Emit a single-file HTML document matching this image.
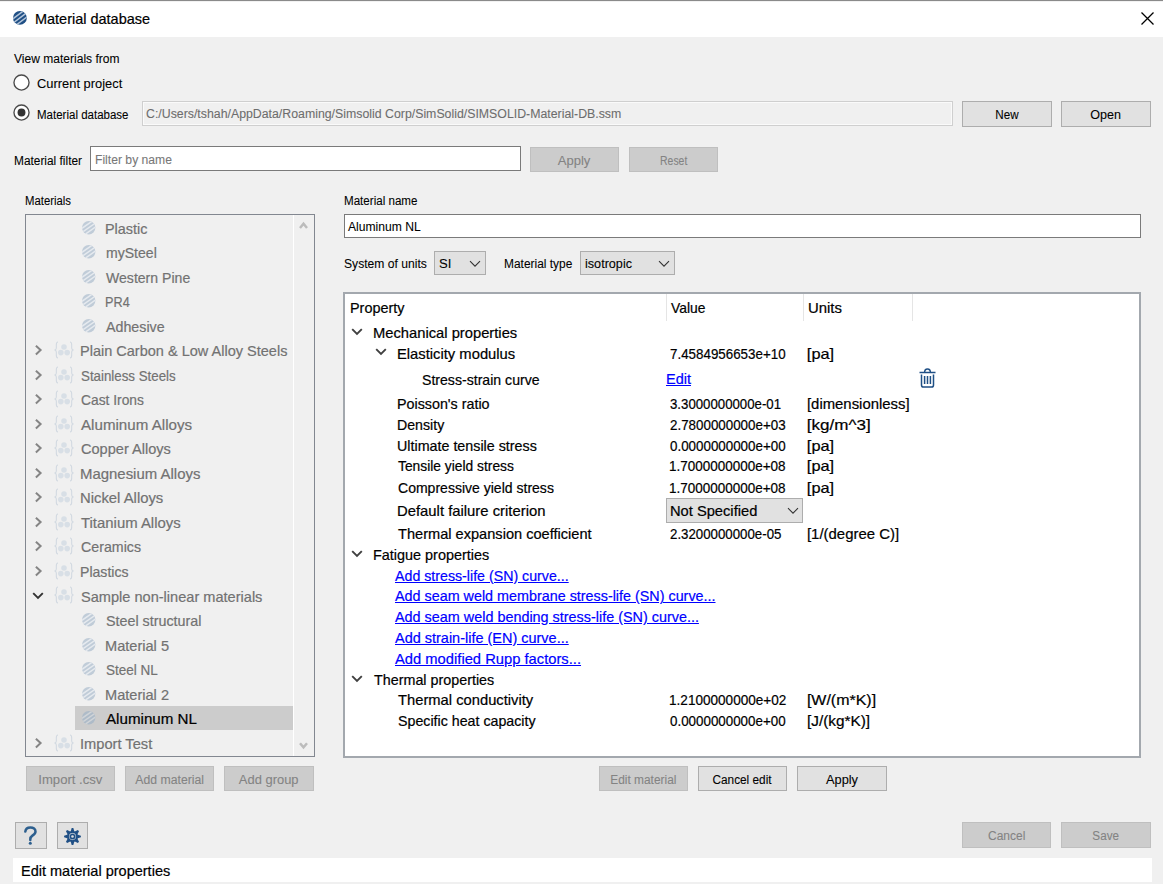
<!DOCTYPE html>
<html><head><meta charset="utf-8"><style>
html,body{margin:0;padding:0;}
body{width:1163px;height:884px;position:relative;overflow:hidden;background:#f0f0f0;font-family:"Liberation Sans", sans-serif;}
.t{position:absolute;white-space:nowrap;line-height:1;}
.b{position:absolute;}
svg.b{overflow:visible;}
</style></head><body>
<div class="b" style="left:0px;top:0px;width:1163px;height:1px;background:#8a8a8a;"></div>
<div class="b" style="left:0px;top:1px;width:1163px;height:1px;background:#f2f2f2;"></div>
<div class="b" style="left:0px;top:2px;width:1163px;height:35px;background:#ffffff;"></div>
<svg class="b" style="left:11.60px;top:9.60px" width="15.80" height="15.80" viewBox="-7.90 -7.90 15.80 15.80">
<defs><clipPath id="h1"><circle cx="0" cy="0" r="6.9"/></clipPath></defs>
<circle cx="0" cy="0" r="6.9" fill="#1f4f85"/>
<g clip-path="url(#h1)" stroke="#b5c6da" stroke-width="1.50"><line x1="-13.10" y1="5.55" x2="8.94" y2="-11.06"/><line x1="-11.02" y1="8.31" x2="11.02" y2="-8.31"/><line x1="-8.94" y1="11.06" x2="13.10" y2="-5.55"/></g></svg>
<div class="t" style="left:35.00px;top:11.71px;font-size:14.4px;color:#000;-webkit-text-stroke:0.2px currentColor;transform:scaleX(1.0054);transform-origin:1.00px 0;">Material database</div>
<svg class="b" style="left:1140px;top:11px" width="15" height="15" viewBox="0 0 15 15"><path d="M1.5 1.5L13.5 13.5M13.5 1.5L1.5 13.5" stroke="#000" stroke-width="1.3"/></svg>
<div class="t" style="left:13.50px;top:53.24px;font-size:12px;color:#000;-webkit-text-stroke:0.08px currentColor;transform:scaleX(1.0034);transform-origin:0.00px 0;">View materials from</div>
<svg class="b" style="left:13px;top:73.5px" width="17" height="17" viewBox="0 0 17 17"><circle cx="8.5" cy="8.5" r="7.55" fill="#fff" stroke="#4a4a4a" stroke-width="1.35"/></svg>
<div class="t" style="left:37.00px;top:78.24px;font-size:12px;color:#000;-webkit-text-stroke:0.08px currentColor;transform:scaleX(1.0746);transform-origin:0.00px 0;">Current project</div>
<svg class="b" style="left:13px;top:104.1px" width="17" height="17" viewBox="0 0 17 17"><circle cx="8.5" cy="8.5" r="7.55" fill="#fff" stroke="#4a4a4a" stroke-width="1.35"/><circle cx="8.5" cy="8.5" r="3.95" fill="#333"/></svg>
<div class="t" style="left:37.20px;top:108.74px;font-size:12px;color:#000;-webkit-text-stroke:0.08px currentColor;transform:scaleX(0.9591);transform-origin:0.00px 0;">Material database</div>
<div class="b" style="left:142px;top:101px;width:811px;height:24.5px;background:#f0f0f0;border:1px solid #cfcfcf;box-sizing:border-box;box-shadow:inset 0 0 0 1px #fafafa;"></div>
<div class="t" style="left:146.00px;top:107.99px;font-size:12.3px;color:#6d6d6d;-webkit-text-stroke:0.08px currentColor;transform:scaleX(1.0021);transform-origin:0.00px 0;">C:/Users/tshah/AppData/Roaming/Simsolid Corp/SimSolid/SIMSOLID-Material-DB.ssm</div>
<div class="b" style="left:962px;top:101px;width:90px;height:26px;background:#e1e1e1;border:1px solid #adadad;box-sizing:border-box;"></div>
<div class="t" style="left:995.00px;top:109.44px;font-size:12px;color:#000;-webkit-text-stroke:0.08px currentColor;transform:scaleX(0.9696);transform-origin:12.00px 0;">New</div>
<div class="b" style="left:1061px;top:101px;width:90px;height:26px;background:#e1e1e1;border:1px solid #adadad;box-sizing:border-box;"></div>
<div class="t" style="left:1091.32px;top:109.44px;font-size:12px;color:#000;-webkit-text-stroke:0.08px currentColor;transform:scaleX(1.0460);transform-origin:14.68px 0;">Open</div>
<div class="t" style="left:14.00px;top:155.24px;font-size:12px;color:#000;-webkit-text-stroke:0.08px currentColor;transform:scaleX(0.9900);transform-origin:0.00px 0;">Material filter</div>
<div class="b" style="left:90px;top:146px;width:431px;height:25px;background:#ffffff;border:1px solid #7a7a7a;box-sizing:border-box;"></div>
<div class="t" style="left:94.50px;top:154.24px;font-size:12px;color:#787878;-webkit-text-stroke:0.08px currentColor;transform:scaleX(1.0124);transform-origin:0.00px 0;">Filter by name</div>
<div class="b" style="left:530px;top:147px;width:89px;height:25px;background:#cccccc;border:1px solid #bfbfbf;box-sizing:border-box;"></div>
<div class="t" style="left:559.49px;top:154.94px;font-size:12px;color:#838383;-webkit-text-stroke:0.08px currentColor;transform:scaleX(1.0860);transform-origin:15.01px 0;">Apply</div>
<div class="b" style="left:629px;top:147px;width:89px;height:25px;background:#cccccc;border:1px solid #bfbfbf;box-sizing:border-box;"></div>
<div class="t" style="left:657.83px;top:154.94px;font-size:12px;color:#838383;-webkit-text-stroke:0.08px currentColor;transform:scaleX(0.8684);transform-origin:15.67px 0;">Reset</div>
<div class="t" style="left:25.00px;top:194.74px;font-size:12px;color:#000;-webkit-text-stroke:0.08px currentColor;transform:scaleX(0.9450);transform-origin:0.00px 0;">Materials</div>
<div class="b" style="left:25px;top:214px;width:290px;height:543px;background:#f0f0f0;border:1px solid #828790;box-sizing:border-box;"></div>
<div class="b" style="left:293px;top:215px;width:1px;height:541px;background:#ffffff;"></div>
<svg class="b" style="left:298px;top:220px" width="11" height="10" viewBox="0 0 11 10"><path d="M2 8L5.5 3.8L9 8" fill="none" stroke="#bcbcbc" stroke-width="2.5"/></svg>
<svg class="b" style="left:298px;top:740px" width="11" height="10" viewBox="0 0 11 10"><path d="M2 3.2L5.5 7.4L9 3.2" fill="none" stroke="#bcbcbc" stroke-width="2.5"/></svg>
<div class="b" style="left:75px;top:706px;width:218px;height:24px;background:#cccccc;"></div>
<svg class="b" style="left:80.60px;top:219.90px" width="15.40" height="15.40" viewBox="-7.70 -7.70 15.40 15.40">
<defs><clipPath id="h2"><circle cx="0" cy="0" r="6.7"/></clipPath></defs>
<circle cx="0" cy="0" r="6.7" fill="#c0ccd8"/>
<g clip-path="url(#h2)" stroke="#e6eaef" stroke-width="1.50"><line x1="-12.90" y1="4.94" x2="9.06" y2="-10.43"/><line x1="-10.98" y1="7.69" x2="10.98" y2="-7.69"/><line x1="-9.06" y1="10.43" x2="12.90" y2="-4.94"/></g></svg>
<div class="t" style="left:105.30px;top:221.71px;font-size:14.4px;color:#727272;-webkit-text-stroke:0.2px currentColor;transform:scaleX(1.0003);transform-origin:1.00px 0;">Plastic</div>
<svg class="b" style="left:80.60px;top:244.42px" width="15.40" height="15.40" viewBox="-7.70 -7.70 15.40 15.40">
<defs><clipPath id="h3"><circle cx="0" cy="0" r="6.7"/></clipPath></defs>
<circle cx="0" cy="0" r="6.7" fill="#c0ccd8"/>
<g clip-path="url(#h3)" stroke="#e6eaef" stroke-width="1.50"><line x1="-12.90" y1="4.94" x2="9.06" y2="-10.43"/><line x1="-10.98" y1="7.69" x2="10.98" y2="-7.69"/><line x1="-9.06" y1="10.43" x2="12.90" y2="-4.94"/></g></svg>
<div class="t" style="left:106.30px;top:246.23px;font-size:14.4px;color:#727272;-webkit-text-stroke:0.2px currentColor;transform:scaleX(0.9771);transform-origin:0.00px 0;">mySteel</div>
<svg class="b" style="left:80.60px;top:268.94px" width="15.40" height="15.40" viewBox="-7.70 -7.70 15.40 15.40">
<defs><clipPath id="h4"><circle cx="0" cy="0" r="6.7"/></clipPath></defs>
<circle cx="0" cy="0" r="6.7" fill="#c0ccd8"/>
<g clip-path="url(#h4)" stroke="#e6eaef" stroke-width="1.50"><line x1="-12.90" y1="4.94" x2="9.06" y2="-10.43"/><line x1="-10.98" y1="7.69" x2="10.98" y2="-7.69"/><line x1="-9.06" y1="10.43" x2="12.90" y2="-4.94"/></g></svg>
<div class="t" style="left:106.30px;top:270.75px;font-size:14.4px;color:#727272;-webkit-text-stroke:0.2px currentColor;transform:scaleX(0.9778);transform-origin:0.00px 0;">Western Pine</div>
<svg class="b" style="left:80.60px;top:293.46px" width="15.40" height="15.40" viewBox="-7.70 -7.70 15.40 15.40">
<defs><clipPath id="h5"><circle cx="0" cy="0" r="6.7"/></clipPath></defs>
<circle cx="0" cy="0" r="6.7" fill="#c0ccd8"/>
<g clip-path="url(#h5)" stroke="#e6eaef" stroke-width="1.50"><line x1="-12.90" y1="4.94" x2="9.06" y2="-10.43"/><line x1="-10.98" y1="7.69" x2="10.98" y2="-7.69"/><line x1="-9.06" y1="10.43" x2="12.90" y2="-4.94"/></g></svg>
<div class="t" style="left:105.30px;top:295.27px;font-size:14.4px;color:#727272;-webkit-text-stroke:0.2px currentColor;transform:scaleX(0.8799);transform-origin:1.00px 0;">PR4</div>
<svg class="b" style="left:80.60px;top:317.98px" width="15.40" height="15.40" viewBox="-7.70 -7.70 15.40 15.40">
<defs><clipPath id="h6"><circle cx="0" cy="0" r="6.7"/></clipPath></defs>
<circle cx="0" cy="0" r="6.7" fill="#c0ccd8"/>
<g clip-path="url(#h6)" stroke="#e6eaef" stroke-width="1.50"><line x1="-12.90" y1="4.94" x2="9.06" y2="-10.43"/><line x1="-10.98" y1="7.69" x2="10.98" y2="-7.69"/><line x1="-9.06" y1="10.43" x2="12.90" y2="-4.94"/></g></svg>
<div class="t" style="left:106.30px;top:319.79px;font-size:14.4px;color:#727272;-webkit-text-stroke:0.2px currentColor;transform:scaleX(0.9899);transform-origin:0.00px 0;">Adhesive</div>
<svg class="b" style="left:33.50px;top:344.20px" width="9" height="12" viewBox="0 0 9 12"><path d="M1.9 1.7L6.6 6.1L1.9 10.5" fill="none" stroke="#858585" stroke-width="2"/></svg>
<svg class="b" style="left:54.00px;top:341.20px" width="20" height="18" viewBox="0 0 20 18"><g fill="none" stroke="#d2d9e1" stroke-width="1.1">
<path d="M4 1C2.3 1 2.3 2 2.3 4V7C2.3 8 1.8 8.6 1 9C1.8 9.4 2.3 10 2.3 11V14C2.3 16 2.3 17 4 17"/>
<path d="M16 1C17.7 1 17.7 2 17.7 4V7C17.7 8 18.2 8.6 19 9C18.2 9.4 17.7 10 17.7 11V14C17.7 16 17.7 17 16 17"/></g>
<g fill="#d8dfe6"><circle cx="10" cy="6" r="2.8"/><circle cx="6.8" cy="11.6" r="2.8"/><circle cx="13.2" cy="11.6" r="2.8"/></g></svg>
<div class="t" style="left:80.10px;top:344.31px;font-size:14.4px;color:#727272;-webkit-text-stroke:0.2px currentColor;transform:scaleX(1.0089);transform-origin:1.00px 0;">Plain Carbon &amp; Low Alloy Steels</div>
<svg class="b" style="left:33.50px;top:368.72px" width="9" height="12" viewBox="0 0 9 12"><path d="M1.9 1.7L6.6 6.1L1.9 10.5" fill="none" stroke="#858585" stroke-width="2"/></svg>
<svg class="b" style="left:54.00px;top:365.72px" width="20" height="18" viewBox="0 0 20 18"><g fill="none" stroke="#d2d9e1" stroke-width="1.1">
<path d="M4 1C2.3 1 2.3 2 2.3 4V7C2.3 8 1.8 8.6 1 9C1.8 9.4 2.3 10 2.3 11V14C2.3 16 2.3 17 4 17"/>
<path d="M16 1C17.7 1 17.7 2 17.7 4V7C17.7 8 18.2 8.6 19 9C18.2 9.4 17.7 10 17.7 11V14C17.7 16 17.7 17 16 17"/></g>
<g fill="#d8dfe6"><circle cx="10" cy="6" r="2.8"/><circle cx="6.8" cy="11.6" r="2.8"/><circle cx="13.2" cy="11.6" r="2.8"/></g></svg>
<div class="t" style="left:81.10px;top:368.83px;font-size:14.4px;color:#727272;-webkit-text-stroke:0.2px currentColor;transform:scaleX(0.9247);transform-origin:0.00px 0;">Stainless Steels</div>
<svg class="b" style="left:33.50px;top:393.24px" width="9" height="12" viewBox="0 0 9 12"><path d="M1.9 1.7L6.6 6.1L1.9 10.5" fill="none" stroke="#858585" stroke-width="2"/></svg>
<svg class="b" style="left:54.00px;top:390.24px" width="20" height="18" viewBox="0 0 20 18"><g fill="none" stroke="#d2d9e1" stroke-width="1.1">
<path d="M4 1C2.3 1 2.3 2 2.3 4V7C2.3 8 1.8 8.6 1 9C1.8 9.4 2.3 10 2.3 11V14C2.3 16 2.3 17 4 17"/>
<path d="M16 1C17.7 1 17.7 2 17.7 4V7C17.7 8 18.2 8.6 19 9C18.2 9.4 17.7 10 17.7 11V14C17.7 16 17.7 17 16 17"/></g>
<g fill="#d8dfe6"><circle cx="10" cy="6" r="2.8"/><circle cx="6.8" cy="11.6" r="2.8"/><circle cx="13.2" cy="11.6" r="2.8"/></g></svg>
<div class="t" style="left:81.10px;top:393.35px;font-size:14.4px;color:#727272;-webkit-text-stroke:0.2px currentColor;transform:scaleX(0.9589);transform-origin:0.00px 0;">Cast Irons</div>
<svg class="b" style="left:33.50px;top:417.76px" width="9" height="12" viewBox="0 0 9 12"><path d="M1.9 1.7L6.6 6.1L1.9 10.5" fill="none" stroke="#858585" stroke-width="2"/></svg>
<svg class="b" style="left:54.00px;top:414.76px" width="20" height="18" viewBox="0 0 20 18"><g fill="none" stroke="#d2d9e1" stroke-width="1.1">
<path d="M4 1C2.3 1 2.3 2 2.3 4V7C2.3 8 1.8 8.6 1 9C1.8 9.4 2.3 10 2.3 11V14C2.3 16 2.3 17 4 17"/>
<path d="M16 1C17.7 1 17.7 2 17.7 4V7C17.7 8 18.2 8.6 19 9C18.2 9.4 17.7 10 17.7 11V14C17.7 16 17.7 17 16 17"/></g>
<g fill="#d8dfe6"><circle cx="10" cy="6" r="2.8"/><circle cx="6.8" cy="11.6" r="2.8"/><circle cx="13.2" cy="11.6" r="2.8"/></g></svg>
<div class="t" style="left:81.10px;top:417.87px;font-size:14.4px;color:#727272;-webkit-text-stroke:0.2px currentColor;transform:scaleX(1.0521);transform-origin:0.00px 0;">Aluminum Alloys</div>
<svg class="b" style="left:33.50px;top:442.28px" width="9" height="12" viewBox="0 0 9 12"><path d="M1.9 1.7L6.6 6.1L1.9 10.5" fill="none" stroke="#858585" stroke-width="2"/></svg>
<svg class="b" style="left:54.00px;top:439.28px" width="20" height="18" viewBox="0 0 20 18"><g fill="none" stroke="#d2d9e1" stroke-width="1.1">
<path d="M4 1C2.3 1 2.3 2 2.3 4V7C2.3 8 1.8 8.6 1 9C1.8 9.4 2.3 10 2.3 11V14C2.3 16 2.3 17 4 17"/>
<path d="M16 1C17.7 1 17.7 2 17.7 4V7C17.7 8 18.2 8.6 19 9C18.2 9.4 17.7 10 17.7 11V14C17.7 16 17.7 17 16 17"/></g>
<g fill="#d8dfe6"><circle cx="10" cy="6" r="2.8"/><circle cx="6.8" cy="11.6" r="2.8"/><circle cx="13.2" cy="11.6" r="2.8"/></g></svg>
<div class="t" style="left:81.10px;top:442.39px;font-size:14.4px;color:#727272;-webkit-text-stroke:0.2px currentColor;transform:scaleX(1.0113);transform-origin:0.00px 0;">Copper Alloys</div>
<svg class="b" style="left:33.50px;top:466.80px" width="9" height="12" viewBox="0 0 9 12"><path d="M1.9 1.7L6.6 6.1L1.9 10.5" fill="none" stroke="#858585" stroke-width="2"/></svg>
<svg class="b" style="left:54.00px;top:463.80px" width="20" height="18" viewBox="0 0 20 18"><g fill="none" stroke="#d2d9e1" stroke-width="1.1">
<path d="M4 1C2.3 1 2.3 2 2.3 4V7C2.3 8 1.8 8.6 1 9C1.8 9.4 2.3 10 2.3 11V14C2.3 16 2.3 17 4 17"/>
<path d="M16 1C17.7 1 17.7 2 17.7 4V7C17.7 8 18.2 8.6 19 9C18.2 9.4 17.7 10 17.7 11V14C17.7 16 17.7 17 16 17"/></g>
<g fill="#d8dfe6"><circle cx="10" cy="6" r="2.8"/><circle cx="6.8" cy="11.6" r="2.8"/><circle cx="13.2" cy="11.6" r="2.8"/></g></svg>
<div class="t" style="left:80.10px;top:466.91px;font-size:14.4px;color:#727272;-webkit-text-stroke:0.2px currentColor;transform:scaleX(1.0383);transform-origin:1.00px 0;">Magnesium Alloys</div>
<svg class="b" style="left:33.50px;top:491.32px" width="9" height="12" viewBox="0 0 9 12"><path d="M1.9 1.7L6.6 6.1L1.9 10.5" fill="none" stroke="#858585" stroke-width="2"/></svg>
<svg class="b" style="left:54.00px;top:488.32px" width="20" height="18" viewBox="0 0 20 18"><g fill="none" stroke="#d2d9e1" stroke-width="1.1">
<path d="M4 1C2.3 1 2.3 2 2.3 4V7C2.3 8 1.8 8.6 1 9C1.8 9.4 2.3 10 2.3 11V14C2.3 16 2.3 17 4 17"/>
<path d="M16 1C17.7 1 17.7 2 17.7 4V7C17.7 8 18.2 8.6 19 9C18.2 9.4 17.7 10 17.7 11V14C17.7 16 17.7 17 16 17"/></g>
<g fill="#d8dfe6"><circle cx="10" cy="6" r="2.8"/><circle cx="6.8" cy="11.6" r="2.8"/><circle cx="13.2" cy="11.6" r="2.8"/></g></svg>
<div class="t" style="left:80.10px;top:491.43px;font-size:14.4px;color:#727272;-webkit-text-stroke:0.2px currentColor;transform:scaleX(1.0315);transform-origin:1.00px 0;">Nickel Alloys</div>
<svg class="b" style="left:33.50px;top:515.84px" width="9" height="12" viewBox="0 0 9 12"><path d="M1.9 1.7L6.6 6.1L1.9 10.5" fill="none" stroke="#858585" stroke-width="2"/></svg>
<svg class="b" style="left:54.00px;top:512.84px" width="20" height="18" viewBox="0 0 20 18"><g fill="none" stroke="#d2d9e1" stroke-width="1.1">
<path d="M4 1C2.3 1 2.3 2 2.3 4V7C2.3 8 1.8 8.6 1 9C1.8 9.4 2.3 10 2.3 11V14C2.3 16 2.3 17 4 17"/>
<path d="M16 1C17.7 1 17.7 2 17.7 4V7C17.7 8 18.2 8.6 19 9C18.2 9.4 17.7 10 17.7 11V14C17.7 16 17.7 17 16 17"/></g>
<g fill="#d8dfe6"><circle cx="10" cy="6" r="2.8"/><circle cx="6.8" cy="11.6" r="2.8"/><circle cx="13.2" cy="11.6" r="2.8"/></g></svg>
<div class="t" style="left:81.10px;top:515.95px;font-size:14.4px;color:#727272;-webkit-text-stroke:0.2px currentColor;transform:scaleX(1.0358);transform-origin:0.00px 0;">Titanium Alloys</div>
<svg class="b" style="left:33.50px;top:540.36px" width="9" height="12" viewBox="0 0 9 12"><path d="M1.9 1.7L6.6 6.1L1.9 10.5" fill="none" stroke="#858585" stroke-width="2"/></svg>
<svg class="b" style="left:54.00px;top:537.36px" width="20" height="18" viewBox="0 0 20 18"><g fill="none" stroke="#d2d9e1" stroke-width="1.1">
<path d="M4 1C2.3 1 2.3 2 2.3 4V7C2.3 8 1.8 8.6 1 9C1.8 9.4 2.3 10 2.3 11V14C2.3 16 2.3 17 4 17"/>
<path d="M16 1C17.7 1 17.7 2 17.7 4V7C17.7 8 18.2 8.6 19 9C18.2 9.4 17.7 10 17.7 11V14C17.7 16 17.7 17 16 17"/></g>
<g fill="#d8dfe6"><circle cx="10" cy="6" r="2.8"/><circle cx="6.8" cy="11.6" r="2.8"/><circle cx="13.2" cy="11.6" r="2.8"/></g></svg>
<div class="t" style="left:81.10px;top:540.47px;font-size:14.4px;color:#727272;-webkit-text-stroke:0.2px currentColor;transform:scaleX(0.9873);transform-origin:0.00px 0;">Ceramics</div>
<svg class="b" style="left:33.50px;top:564.88px" width="9" height="12" viewBox="0 0 9 12"><path d="M1.9 1.7L6.6 6.1L1.9 10.5" fill="none" stroke="#858585" stroke-width="2"/></svg>
<svg class="b" style="left:54.00px;top:561.88px" width="20" height="18" viewBox="0 0 20 18"><g fill="none" stroke="#d2d9e1" stroke-width="1.1">
<path d="M4 1C2.3 1 2.3 2 2.3 4V7C2.3 8 1.8 8.6 1 9C1.8 9.4 2.3 10 2.3 11V14C2.3 16 2.3 17 4 17"/>
<path d="M16 1C17.7 1 17.7 2 17.7 4V7C17.7 8 18.2 8.6 19 9C18.2 9.4 17.7 10 17.7 11V14C17.7 16 17.7 17 16 17"/></g>
<g fill="#d8dfe6"><circle cx="10" cy="6" r="2.8"/><circle cx="6.8" cy="11.6" r="2.8"/><circle cx="13.2" cy="11.6" r="2.8"/></g></svg>
<div class="t" style="left:80.10px;top:564.99px;font-size:14.4px;color:#727272;-webkit-text-stroke:0.2px currentColor;transform:scaleX(0.9776);transform-origin:1.00px 0;">Plastics</div>
<svg class="b" style="left:31.80px;top:592.00px" width="12" height="9" viewBox="0 0 12 9"><path d="M1.2 1.2L6 6L10.8 1.2" fill="none" stroke="#333333" stroke-width="1.9"/></svg>
<svg class="b" style="left:54.00px;top:586.40px" width="20" height="18" viewBox="0 0 20 18"><g fill="none" stroke="#d2d9e1" stroke-width="1.1">
<path d="M4 1C2.3 1 2.3 2 2.3 4V7C2.3 8 1.8 8.6 1 9C1.8 9.4 2.3 10 2.3 11V14C2.3 16 2.3 17 4 17"/>
<path d="M16 1C17.7 1 17.7 2 17.7 4V7C17.7 8 18.2 8.6 19 9C18.2 9.4 17.7 10 17.7 11V14C17.7 16 17.7 17 16 17"/></g>
<g fill="#d8dfe6"><circle cx="10" cy="6" r="2.8"/><circle cx="6.8" cy="11.6" r="2.8"/><circle cx="13.2" cy="11.6" r="2.8"/></g></svg>
<div class="t" style="left:81.10px;top:589.51px;font-size:14.4px;color:#727272;-webkit-text-stroke:0.2px currentColor;transform:scaleX(1.0125);transform-origin:0.00px 0;">Sample non-linear materials</div>
<svg class="b" style="left:80.60px;top:612.22px" width="15.40" height="15.40" viewBox="-7.70 -7.70 15.40 15.40">
<defs><clipPath id="h7"><circle cx="0" cy="0" r="6.7"/></clipPath></defs>
<circle cx="0" cy="0" r="6.7" fill="#c0ccd8"/>
<g clip-path="url(#h7)" stroke="#e6eaef" stroke-width="1.50"><line x1="-12.90" y1="4.94" x2="9.06" y2="-10.43"/><line x1="-10.98" y1="7.69" x2="10.98" y2="-7.69"/><line x1="-9.06" y1="10.43" x2="12.90" y2="-4.94"/></g></svg>
<div class="t" style="left:106.30px;top:614.03px;font-size:14.4px;color:#727272;-webkit-text-stroke:0.2px currentColor;transform:scaleX(0.9939);transform-origin:0.00px 0;">Steel structural</div>
<svg class="b" style="left:80.60px;top:636.74px" width="15.40" height="15.40" viewBox="-7.70 -7.70 15.40 15.40">
<defs><clipPath id="h8"><circle cx="0" cy="0" r="6.7"/></clipPath></defs>
<circle cx="0" cy="0" r="6.7" fill="#c0ccd8"/>
<g clip-path="url(#h8)" stroke="#e6eaef" stroke-width="1.50"><line x1="-12.90" y1="4.94" x2="9.06" y2="-10.43"/><line x1="-10.98" y1="7.69" x2="10.98" y2="-7.69"/><line x1="-9.06" y1="10.43" x2="12.90" y2="-4.94"/></g></svg>
<div class="t" style="left:105.30px;top:638.55px;font-size:14.4px;color:#727272;-webkit-text-stroke:0.2px currentColor;transform:scaleX(1.0132);transform-origin:1.00px 0;">Material 5</div>
<svg class="b" style="left:80.60px;top:661.26px" width="15.40" height="15.40" viewBox="-7.70 -7.70 15.40 15.40">
<defs><clipPath id="h9"><circle cx="0" cy="0" r="6.7"/></clipPath></defs>
<circle cx="0" cy="0" r="6.7" fill="#c0ccd8"/>
<g clip-path="url(#h9)" stroke="#e6eaef" stroke-width="1.50"><line x1="-12.90" y1="4.94" x2="9.06" y2="-10.43"/><line x1="-10.98" y1="7.69" x2="10.98" y2="-7.69"/><line x1="-9.06" y1="10.43" x2="12.90" y2="-4.94"/></g></svg>
<div class="t" style="left:106.30px;top:663.07px;font-size:14.4px;color:#727272;-webkit-text-stroke:0.2px currentColor;transform:scaleX(0.9367);transform-origin:0.00px 0;">Steel NL</div>
<svg class="b" style="left:80.60px;top:685.78px" width="15.40" height="15.40" viewBox="-7.70 -7.70 15.40 15.40">
<defs><clipPath id="h10"><circle cx="0" cy="0" r="6.7"/></clipPath></defs>
<circle cx="0" cy="0" r="6.7" fill="#c0ccd8"/>
<g clip-path="url(#h10)" stroke="#e6eaef" stroke-width="1.50"><line x1="-12.90" y1="4.94" x2="9.06" y2="-10.43"/><line x1="-10.98" y1="7.69" x2="10.98" y2="-7.69"/><line x1="-9.06" y1="10.43" x2="12.90" y2="-4.94"/></g></svg>
<div class="t" style="left:105.30px;top:687.59px;font-size:14.4px;color:#727272;-webkit-text-stroke:0.2px currentColor;transform:scaleX(1.0132);transform-origin:1.00px 0;">Material 2</div>
<svg class="b" style="left:80.60px;top:710.30px" width="15.40" height="15.40" viewBox="-7.70 -7.70 15.40 15.40">
<defs><clipPath id="h11"><circle cx="0" cy="0" r="6.7"/></clipPath></defs>
<circle cx="0" cy="0" r="6.7" fill="#aebbc8"/>
<g clip-path="url(#h11)" stroke="#d0d4d8" stroke-width="1.50"><line x1="-12.90" y1="4.94" x2="9.06" y2="-10.43"/><line x1="-10.98" y1="7.69" x2="10.98" y2="-7.69"/><line x1="-9.06" y1="10.43" x2="12.90" y2="-4.94"/></g></svg>
<div class="t" style="left:106.30px;top:712.11px;font-size:14.4px;color:#000;-webkit-text-stroke:0.2px currentColor;transform:scaleX(1.0536);transform-origin:0.00px 0;">Aluminum NL</div>
<svg class="b" style="left:33.50px;top:736.52px" width="9" height="12" viewBox="0 0 9 12"><path d="M1.9 1.7L6.6 6.1L1.9 10.5" fill="none" stroke="#858585" stroke-width="2"/></svg>
<svg class="b" style="left:54.00px;top:733.52px" width="20" height="18" viewBox="0 0 20 18"><g fill="none" stroke="#d2d9e1" stroke-width="1.1">
<path d="M4 1C2.3 1 2.3 2 2.3 4V7C2.3 8 1.8 8.6 1 9C1.8 9.4 2.3 10 2.3 11V14C2.3 16 2.3 17 4 17"/>
<path d="M16 1C17.7 1 17.7 2 17.7 4V7C17.7 8 18.2 8.6 19 9C18.2 9.4 17.7 10 17.7 11V14C17.7 16 17.7 17 16 17"/></g>
<g fill="#d8dfe6"><circle cx="10" cy="6" r="2.8"/><circle cx="6.8" cy="11.6" r="2.8"/><circle cx="13.2" cy="11.6" r="2.8"/></g></svg>
<div class="t" style="left:80.10px;top:736.63px;font-size:14.4px;color:#727272;-webkit-text-stroke:0.2px currentColor;transform:scaleX(1.0189);transform-origin:1.00px 0;">Import Test</div>
<div class="b" style="left:26px;top:766px;width:89px;height:25px;background:#cccccc;border:1px solid #bfbfbf;box-sizing:border-box;"></div>
<div class="t" style="left:41.16px;top:773.94px;font-size:12px;color:#838383;-webkit-text-stroke:0.08px currentColor;transform:scaleX(1.0923);transform-origin:29.34px 0;">Import .csv</div>
<div class="b" style="left:125px;top:766px;width:89px;height:25px;background:#cccccc;border:1px solid #bfbfbf;box-sizing:border-box;"></div>
<div class="t" style="left:135.82px;top:773.94px;font-size:12px;color:#838383;-webkit-text-stroke:0.08px currentColor;transform:scaleX(1.0195);transform-origin:33.68px 0;">Add material</div>
<div class="b" style="left:224px;top:766px;width:90px;height:25px;background:#cccccc;border:1px solid #bfbfbf;box-sizing:border-box;"></div>
<div class="t" style="left:241.31px;top:773.94px;font-size:12px;color:#838383;-webkit-text-stroke:0.08px currentColor;transform:scaleX(1.0771);transform-origin:27.69px 0;">Add group</div>
<div class="t" style="left:344.20px;top:194.74px;font-size:12px;color:#000;-webkit-text-stroke:0.08px currentColor;transform:scaleX(0.9665);transform-origin:0.00px 0;">Material name</div>
<div class="b" style="left:344px;top:214px;width:797px;height:24px;background:#ffffff;border:1px solid #7a7a7a;box-sizing:border-box;"></div>
<div class="t" style="left:348.00px;top:221.44px;font-size:12px;color:#000;-webkit-text-stroke:0.08px currentColor;transform:scaleX(1.0090);transform-origin:0.00px 0;">Aluminum NL</div>
<div class="t" style="left:344.00px;top:258.24px;font-size:12px;color:#000;-webkit-text-stroke:0.08px currentColor;transform:scaleX(1.0094);transform-origin:0.00px 0;">System of units</div>
<div class="b" style="left:434px;top:251px;width:52px;height:24px;background:#e1e1e1;border:1px solid #adadad;box-sizing:border-box;"></div>
<div class="t" style="left:438.75px;top:258.24px;font-size:12px;color:#000;-webkit-text-stroke:0.08px currentColor;transform:scaleX(1.0905);transform-origin:0.00px 0;">SI</div>
<svg class="b" style="left:469px;top:260px" width="12" height="8" viewBox="0 0 12 8"><path d="M1 1.2L6 6.2L11 1.2" fill="none" stroke="#333" stroke-width="1.1"/></svg>
<div class="t" style="left:503.75px;top:258.24px;font-size:12px;color:#000;-webkit-text-stroke:0.08px currentColor;transform:scaleX(0.9939);transform-origin:0.00px 0;">Material type</div>
<div class="b" style="left:580px;top:251px;width:95px;height:24px;background:#e1e1e1;border:1px solid #adadad;box-sizing:border-box;"></div>
<div class="t" style="left:585.00px;top:258.24px;font-size:12px;color:#000;-webkit-text-stroke:0.08px currentColor;transform:scaleX(1.0518);transform-origin:0.00px 0;">isotropic</div>
<svg class="b" style="left:658px;top:260px" width="12" height="8" viewBox="0 0 12 8"><path d="M1 1.2L6 6.2L11 1.2" fill="none" stroke="#333" stroke-width="1.1"/></svg>
<div class="b" style="left:343px;top:292px;width:798px;height:465.5px;background:#ffffff;border:2px solid #a3a8ae;box-sizing:border-box;"></div>
<div class="b" style="left:666px;top:294px;width:1px;height:27px;background:#e5e5e5;"></div>
<div class="b" style="left:803px;top:294px;width:1px;height:27px;background:#e5e5e5;"></div>
<div class="b" style="left:912px;top:294px;width:1px;height:27px;background:#e5e5e5;"></div>
<div class="t" style="left:349.50px;top:300.81px;font-size:14.4px;color:#000;-webkit-text-stroke:0.2px currentColor;transform:scaleX(1.0020);transform-origin:1.00px 0;">Property</div>
<div class="t" style="left:671.40px;top:301.21px;font-size:14.4px;color:#000;-webkit-text-stroke:0.2px currentColor;transform:scaleX(0.9627);transform-origin:0.00px 0;">Value</div>
<div class="t" style="left:807.70px;top:301.21px;font-size:14.4px;color:#000;-webkit-text-stroke:0.2px currentColor;transform:scaleX(1.0351);transform-origin:1.00px 0;">Units</div>
<svg class="b" style="left:350.60px;top:327.60px" width="12" height="9" viewBox="0 0 12 9"><path d="M1.2 1.2L6 6L10.8 1.2" fill="none" stroke="#404040" stroke-width="1.9"/></svg>
<div class="t" style="left:372.50px;top:325.71px;font-size:14.4px;color:#000;-webkit-text-stroke:0.2px currentColor;transform:scaleX(1.0245);transform-origin:1.00px 0;">Mechanical properties</div>
<svg class="b" style="left:375.00px;top:348.40px" width="12" height="9" viewBox="0 0 12 9"><path d="M1.2 1.2L6 6L10.8 1.2" fill="none" stroke="#404040" stroke-width="1.9"/></svg>
<div class="t" style="left:397.40px;top:346.91px;font-size:14.4px;color:#000;-webkit-text-stroke:0.2px currentColor;transform:scaleX(1.0266);transform-origin:1.00px 0;">Elasticity modulus</div>
<div class="t" style="left:670.40px;top:346.91px;font-size:14.4px;color:#000;-webkit-text-stroke:0.2px currentColor;transform:scaleX(0.9289);transform-origin:0.00px 0;">7.4584956653e+10</div>
<div class="t" style="left:806.70px;top:346.91px;font-size:14.4px;color:#000;-webkit-text-stroke:0.2px currentColor;transform:scaleX(1.1361);transform-origin:1.00px 0;">[pa]</div>
<div class="t" style="left:422.30px;top:373.21px;font-size:14.4px;color:#000;-webkit-text-stroke:0.2px currentColor;transform:scaleX(0.9804);transform-origin:0.00px 0;">Stress-strain curve</div>
<div class="t" style="left:665.50px;top:371.81px;font-size:14.4px;color:#0000ff;-webkit-text-stroke:0.2px currentColor;transform:scaleX(1.0084);transform-origin:1.00px 0;text-decoration:underline;">Edit</div>
<svg class="b" style="left:917px;top:366px" width="22" height="24" viewBox="0 0 22 24"><g fill="none" stroke="#1f4f85" stroke-width="1.5">
<path d="M2.5 6.5H18.5"/><path d="M7.6 6.5C7.6 4 8.6 3 10.5 3C12.4 3 13.4 4 13.4 6.5"/>
<path d="M4.5 8.6V19C4.5 20.5 5.3 21.1 6.5 21.1H14.5C15.7 21.1 16.5 20.5 16.5 19V8.6"/>
<path d="M7.6 10V18M10.5 10V18M13.4 10V18"/></g></svg>
<div class="t" style="left:397.40px;top:397.21px;font-size:14.4px;color:#000;-webkit-text-stroke:0.2px currentColor;transform:scaleX(0.9932);transform-origin:1.00px 0;">Poisson&#x27;s ratio</div>
<div class="t" style="left:670.40px;top:397.21px;font-size:14.4px;color:#000;-webkit-text-stroke:0.2px currentColor;transform:scaleX(0.9186);transform-origin:0.00px 0;">3.3000000000e-01</div>
<div class="t" style="left:806.70px;top:397.21px;font-size:14.4px;color:#000;-webkit-text-stroke:0.2px currentColor;transform:scaleX(1.0341);transform-origin:1.00px 0;">[dimensionless]</div>
<div class="t" style="left:397.40px;top:417.96px;font-size:14.4px;color:#000;-webkit-text-stroke:0.2px currentColor;transform:scaleX(0.9835);transform-origin:1.00px 0;">Density</div>
<div class="t" style="left:670.40px;top:417.96px;font-size:14.4px;color:#000;-webkit-text-stroke:0.2px currentColor;transform:scaleX(0.9289);transform-origin:0.00px 0;">2.7800000000e+03</div>
<div class="t" style="left:806.70px;top:417.96px;font-size:14.4px;color:#000;-webkit-text-stroke:0.2px currentColor;transform:scaleX(1.1841);transform-origin:1.00px 0;">[kg/m^3]</div>
<div class="t" style="left:397.40px;top:438.81px;font-size:14.4px;color:#000;-webkit-text-stroke:0.2px currentColor;transform:scaleX(0.9931);transform-origin:1.00px 0;">Ultimate tensile stress</div>
<div class="t" style="left:670.40px;top:438.81px;font-size:14.4px;color:#000;-webkit-text-stroke:0.2px currentColor;transform:scaleX(0.9289);transform-origin:0.00px 0;">0.0000000000e+00</div>
<div class="t" style="left:806.70px;top:438.81px;font-size:14.4px;color:#000;-webkit-text-stroke:0.2px currentColor;transform:scaleX(1.1361);transform-origin:1.00px 0;">[pa]</div>
<div class="t" style="left:398.40px;top:459.46px;font-size:14.4px;color:#000;-webkit-text-stroke:0.2px currentColor;transform:scaleX(0.9596);transform-origin:0.00px 0;">Tensile yield stress</div>
<div class="t" style="left:669.40px;top:459.46px;font-size:14.4px;color:#000;-webkit-text-stroke:0.2px currentColor;transform:scaleX(0.9364);transform-origin:1.00px 0;">1.7000000000e+08</div>
<div class="t" style="left:806.70px;top:459.46px;font-size:14.4px;color:#000;-webkit-text-stroke:0.2px currentColor;transform:scaleX(1.1361);transform-origin:1.00px 0;">[pa]</div>
<div class="t" style="left:398.40px;top:480.71px;font-size:14.4px;color:#000;-webkit-text-stroke:0.2px currentColor;transform:scaleX(0.9747);transform-origin:0.00px 0;">Compressive yield stress</div>
<div class="t" style="left:669.40px;top:480.71px;font-size:14.4px;color:#000;-webkit-text-stroke:0.2px currentColor;transform:scaleX(0.9364);transform-origin:1.00px 0;">1.7000000000e+08</div>
<div class="t" style="left:806.70px;top:480.71px;font-size:14.4px;color:#000;-webkit-text-stroke:0.2px currentColor;transform:scaleX(1.1361);transform-origin:1.00px 0;">[pa]</div>
<div class="t" style="left:397.40px;top:503.81px;font-size:14.4px;color:#000;-webkit-text-stroke:0.2px currentColor;transform:scaleX(1.0317);transform-origin:1.00px 0;">Default failure criterion</div>
<div class="b" style="left:666px;top:498px;width:137px;height:25px;background:#e1e1e1;border:1px solid #adadad;box-sizing:border-box;"></div>
<div class="t" style="left:670.10px;top:503.81px;font-size:14.4px;color:#000;-webkit-text-stroke:0.2px currentColor;transform:scaleX(1.0202);transform-origin:1.00px 0;">Not Specified</div>
<svg class="b" style="left:786.5px;top:507px" width="12" height="8" viewBox="0 0 12 8"><path d="M1 1.2L6 6.2L11 1.2" fill="none" stroke="#333" stroke-width="1.1"/></svg>
<div class="t" style="left:398.40px;top:526.51px;font-size:14.4px;color:#000;-webkit-text-stroke:0.2px currentColor;transform:scaleX(1.0141);transform-origin:0.00px 0;">Thermal expansion coefficient</div>
<div class="t" style="left:670.40px;top:526.51px;font-size:14.4px;color:#000;-webkit-text-stroke:0.2px currentColor;transform:scaleX(0.9219);transform-origin:0.00px 0;">2.3200000000e-05</div>
<div class="t" style="left:806.70px;top:526.51px;font-size:14.4px;color:#000;-webkit-text-stroke:0.2px currentColor;transform:scaleX(1.0371);transform-origin:1.00px 0;">[1/(degree C)]</div>
<svg class="b" style="left:350.60px;top:549.80px" width="12" height="9" viewBox="0 0 12 9"><path d="M1.2 1.2L6 6L10.8 1.2" fill="none" stroke="#404040" stroke-width="1.9"/></svg>
<div class="t" style="left:372.75px;top:547.96px;font-size:14.4px;color:#000;-webkit-text-stroke:0.2px currentColor;transform:scaleX(1.0018);transform-origin:1.00px 0;">Fatigue properties</div>
<div class="t" style="left:395.00px;top:568.51px;font-size:14.4px;color:#0000ff;-webkit-text-stroke:0.2px currentColor;transform:scaleX(0.9873);transform-origin:0.00px 0;text-decoration:underline;">Add stress-life (SN) curve...</div>
<div class="t" style="left:395.00px;top:589.36px;font-size:14.4px;color:#0000ff;-webkit-text-stroke:0.2px currentColor;transform:scaleX(0.9969);transform-origin:0.00px 0;text-decoration:underline;">Add seam weld membrane stress-life (SN) curve...</div>
<div class="t" style="left:395.00px;top:610.21px;font-size:14.4px;color:#0000ff;-webkit-text-stroke:0.2px currentColor;transform:scaleX(0.9999);transform-origin:0.00px 0;text-decoration:underline;">Add seam weld bending stress-life (SN) curve...</div>
<div class="t" style="left:395.00px;top:631.06px;font-size:14.4px;color:#0000ff;-webkit-text-stroke:0.2px currentColor;transform:scaleX(1.0056);transform-origin:0.00px 0;text-decoration:underline;">Add strain-life (EN) curve...</div>
<div class="t" style="left:395.00px;top:651.91px;font-size:14.4px;color:#0000ff;-webkit-text-stroke:0.2px currentColor;transform:scaleX(1.0245);transform-origin:0.00px 0;text-decoration:underline;">Add modified Rupp factors...</div>
<svg class="b" style="left:350.60px;top:674.50px" width="12" height="9" viewBox="0 0 12 9"><path d="M1.2 1.2L6 6L10.8 1.2" fill="none" stroke="#404040" stroke-width="1.9"/></svg>
<div class="t" style="left:374.00px;top:672.51px;font-size:14.4px;color:#000;-webkit-text-stroke:0.2px currentColor;transform:scaleX(0.9953);transform-origin:0.00px 0;">Thermal properties</div>
<div class="t" style="left:398.40px;top:693.31px;font-size:14.4px;color:#000;-webkit-text-stroke:0.2px currentColor;transform:scaleX(1.0244);transform-origin:0.00px 0;">Thermal conductivity</div>
<div class="t" style="left:669.40px;top:693.31px;font-size:14.4px;color:#000;-webkit-text-stroke:0.2px currentColor;transform:scaleX(0.9421);transform-origin:1.00px 0;">1.2100000000e+02</div>
<div class="t" style="left:806.70px;top:693.31px;font-size:14.4px;color:#000;-webkit-text-stroke:0.2px currentColor;transform:scaleX(1.1102);transform-origin:1.00px 0;">[W/(m*K)]</div>
<div class="t" style="left:398.40px;top:714.41px;font-size:14.4px;color:#000;-webkit-text-stroke:0.2px currentColor;transform:scaleX(0.9886);transform-origin:0.00px 0;">Specific heat capacity</div>
<div class="t" style="left:670.40px;top:714.41px;font-size:14.4px;color:#000;-webkit-text-stroke:0.2px currentColor;transform:scaleX(0.9289);transform-origin:0.00px 0;">0.0000000000e+00</div>
<div class="t" style="left:806.70px;top:714.41px;font-size:14.4px;color:#000;-webkit-text-stroke:0.2px currentColor;transform:scaleX(1.0669);transform-origin:1.00px 0;">[J/(kg*K)]</div>
<div class="b" style="left:599px;top:766px;width:89px;height:25px;background:#cccccc;border:1px solid #bfbfbf;box-sizing:border-box;"></div>
<div class="t" style="left:610.15px;top:773.94px;font-size:12px;color:#838383;-webkit-text-stroke:0.08px currentColor;transform:scaleX(0.9920);transform-origin:33.35px 0;">Edit material</div>
<div class="b" style="left:698px;top:766px;width:89px;height:25px;background:#e1e1e1;border:1px solid #adadad;box-sizing:border-box;"></div>
<div class="t" style="left:712.48px;top:773.94px;font-size:12px;color:#000;-webkit-text-stroke:0.08px currentColor;transform:scaleX(0.9852);transform-origin:30.02px 0;">Cancel edit</div>
<div class="b" style="left:797px;top:766px;width:90px;height:25px;background:#e1e1e1;border:1px solid #adadad;box-sizing:border-box;"></div>
<div class="t" style="left:826.99px;top:773.94px;font-size:12px;color:#000;-webkit-text-stroke:0.08px currentColor;transform:scaleX(1.0660);transform-origin:15.01px 0;">Apply</div>
<div class="b" style="left:15px;top:822px;width:32px;height:27px;background:#e1e1e1;border:1px solid #adadad;box-sizing:border-box;"></div>
<svg class="b" style="left:15px;top:822px" width="32" height="27" viewBox="0 0 32 27"><g fill="none" stroke="#2d5f8e" stroke-width="2.5" stroke-linecap="round">
<path d="M10.3 9.6C10.6 6.8 12.7 5.4 15.4 5.4C18.4 5.4 20.5 7.1 20.5 9.5C20.5 11.6 19 12.6 17.4 13.6C16 14.5 15.3 15.4 15.3 17.3V17.9"/></g>
<circle cx="15.3" cy="21.3" r="1.5" fill="#2d5f8e"/></svg>
<div class="b" style="left:57px;top:822px;width:31px;height:27px;background:#e1e1e1;border:1px solid #adadad;box-sizing:border-box;"></div>
<svg class="b" style="left:62.6px;top:826.6px" width="19" height="19" viewBox="-9.5 -9.5 19 19"><g fill="#1f4f85"><path d="M-2 -4.6L-0.8 -8.4H0.8L2 -4.6Z" transform="rotate(0)"/><path d="M-2 -4.6L-0.8 -8.4H0.8L2 -4.6Z" transform="rotate(45)"/><path d="M-2 -4.6L-0.8 -8.4H0.8L2 -4.6Z" transform="rotate(90)"/><path d="M-2 -4.6L-0.8 -8.4H0.8L2 -4.6Z" transform="rotate(135)"/><path d="M-2 -4.6L-0.8 -8.4H0.8L2 -4.6Z" transform="rotate(180)"/><path d="M-2 -4.6L-0.8 -8.4H0.8L2 -4.6Z" transform="rotate(225)"/><path d="M-2 -4.6L-0.8 -8.4H0.8L2 -4.6Z" transform="rotate(270)"/><path d="M-2 -4.6L-0.8 -8.4H0.8L2 -4.6Z" transform="rotate(315)"/></g>
<circle cx="0" cy="0" r="4.4" fill="none" stroke="#1f4f85" stroke-width="2"/><circle cx="0" cy="0" r="3.2" fill="none" stroke="#8fa6c0" stroke-width="0.6"/><circle cx="0" cy="0" r="2.1" fill="none" stroke="#1f4f85" stroke-width="1.5"/></svg>
<div class="b" style="left:962px;top:822px;width:89px;height:26px;background:#cccccc;border:1px solid #bfbfbf;box-sizing:border-box;"></div>
<div class="t" style="left:987.82px;top:830.44px;font-size:12px;color:#838383;-webkit-text-stroke:0.08px currentColor;transform:scaleX(1.0003);transform-origin:18.68px 0;">Cancel</div>
<div class="b" style="left:1061px;top:822px;width:90px;height:26px;background:#cccccc;border:1px solid #bfbfbf;box-sizing:border-box;"></div>
<div class="t" style="left:1092.32px;top:830.44px;font-size:12px;color:#838383;-webkit-text-stroke:0.08px currentColor;transform:scaleX(0.9755);transform-origin:13.68px 0;">Save</div>
<div class="b" style="left:13px;top:858px;width:1139px;height:24px;background:#ffffff;"></div>
<div class="t" style="left:21.00px;top:863.81px;font-size:14.4px;color:#000;-webkit-text-stroke:0.2px currentColor;transform:scaleX(1.0084);transform-origin:1.00px 0;">Edit material properties</div>
</body></html>
